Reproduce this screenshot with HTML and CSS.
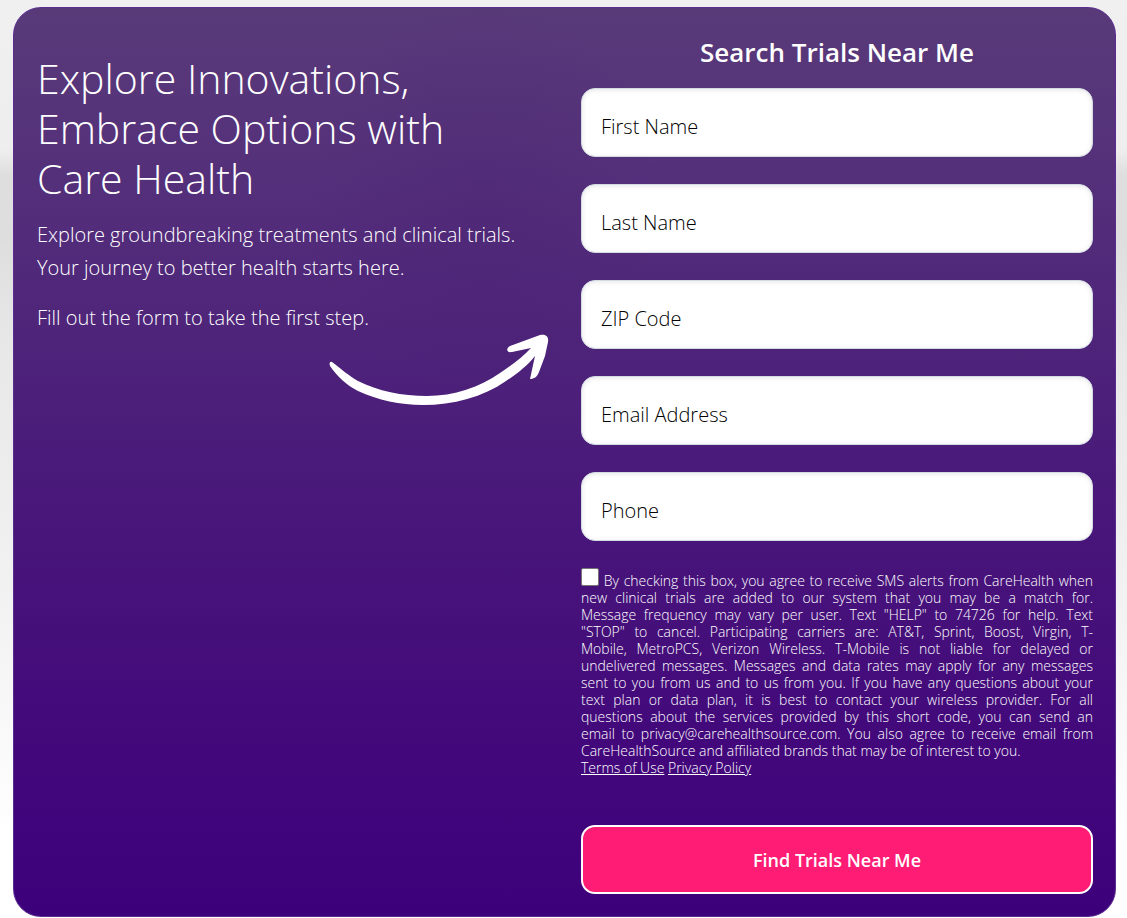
FILE: index.html
```html
<!DOCTYPE html>
<html lang="en">
<head>
<meta charset="UTF-8">
<meta name="viewport" content="width=device-width, initial-scale=1">
<title>Care Health - Search Trials Near Me</title>
<link rel="stylesheet" href="styles.css">
</head>
<body>
<main class="card">
  <section class="intro">
    <h1>Explore Innovations, Embrace Options with Care Health</h1>
    <p>Explore groundbreaking treatments and clinical trials. Your journey to better health starts here.</p>
    <p>Fill out the form to take the first step.</p>
    <svg class="arrow" width="221" height="72" viewBox="0 0 221 72" aria-hidden="true">
      <path fill="#fff" d="M4 28 C12 34 21 42 30 47 C50 57 74 62 99 62 C126 62 152 53 172 39 C184 31 195 23 203 14 L184 18 C178 19 178 14 182 12 L212 1 C217 0 221 2 220 8 L217 22 L211 38 C209 43 206 45 202 45 L207 22 C199 32 190 39 178 47 C155 63 125 71 95 71 C72 71 50 66 30 57 C18 51 9 42 2 32 C1 29 2 27 4 28 Z"/>
    </svg>
  </section>

  <form class="trial-form">
    <h2>Search Trials Near Me</h2>
    <div class="fields">
      <input type="text" aria-label="First Name" placeholder="First Name">
      <input type="text" aria-label="Last Name" placeholder="Last Name">
      <input type="text" aria-label="ZIP Code" placeholder="ZIP Code">
      <input type="email" aria-label="Email Address" placeholder="Email Address">
      <input type="tel" aria-label="Phone" placeholder="Phone">
    </div>
    <div class="consent">
      <label>
        <input type="checkbox">
        By checking this box, you agree to receive SMS alerts from CareHealth when<br>
        new clinical trials are added to our system that you may be a match for.<br>
        Message frequency may vary per user. Text "HELP" to 74726 for help. Text<br>
        "STOP" to cancel. Participating carriers are: AT&amp;T, Sprint, Boost, Virgin, T-<br>
        Mobile, MetroPCS, Verizon Wireless. T-Mobile is not liable for delayed or<br>
        undelivered messages. Messages and data rates may apply for any messages<br>
        sent to you from us and to us from you. If you have any questions about your<br>
        text plan or data plan, it is best to contact your wireless provider. For all<br>
        questions about the services provided by this short code, you can send an<br>
        email to privacy@carehealthsource.com. You also agree to receive email from
        <span class="last-line">CareHealthSource and affiliated brands that may be of interest to you.</span>
      </label>
      <a href="#">Terms of Use</a> <a href="#">Privacy Policy</a>
    </div>
    <button type="submit">Find Trials Near Me</button>
  </form>
</main>
</body>
</html>
```
FILE: styles.css
```css
* { box-sizing: border-box; }
body {
  min-height: 100vh;
  margin: 0;
  padding: 7px 11px 1px 13px;
  font-family: "Open Sans", "Noto Sans", sans-serif;
  font-weight: 300;
  color: #fff;
  background: linear-gradient(to bottom, #f0f0f0 0, #eeeeee 150px, #dedede 175px, #dedede 240px, #e8e8e8 350px, #f2f2f2 600px, #fff 840px);
}
.card {
  display: grid;
  grid-template-columns: 1fr 1fr;
  gap: 32px;
  padding: 24px 22px 22px 23px;
  border: 1px solid #5b2d91;
  border-radius: 28px;
  background:
    radial-gradient(ellipse 180px 200px at 470px 190px, rgba(60, 20, 105, 0.15), transparent),
    linear-gradient(to bottom, #583a79 0, #55317a 150px, #4e247a 330px, #48167a 520px, #42087b 740px, #3d007b 100%);
}
.intro { display: flex; flex-direction: column; padding-top: 21px; }
.intro h1 {
  max-width: 440px;
  margin: 0 0 15px;
  font-size: 41px;
  font-weight: 300;
  line-height: 50px;
}
.intro p { margin: 0 0 17px; font-size: 20px; line-height: 33px; }
.intro p:last-of-type { margin-bottom: 0; }
.arrow { align-self: flex-end; }
.trial-form { display: flex; flex-direction: column; }
.trial-form h2 {
  margin: 0 0 16px;
  font-size: 26px;
  font-weight: 600;
  line-height: 40px;
  text-align: center;
}
.fields { display: grid; gap: 27px; margin-bottom: 27px; }
.fields input {
  width: 100%;
  height: 69px;
  padding: 7px 19px 0;
  border: 1px solid #d3dbe3;
  border-radius: 14px;
  background: #fff;
  box-shadow: inset 0 1px 5px rgba(0, 0, 0, 0.1);
  font: inherit;
  font-size: 20px;
  color: #000;
}
.fields input::placeholder { color: #000; opacity: 1; }
.consent {
  margin-bottom: 49px;
  font-size: 14px;
  line-height: 17px;
}
.consent label { display: block; text-align: justify; text-align-last: justify; }
.consent .last-line { display: block; text-align-last: left; }
.consent input {
  appearance: none;
  width: 18px;
  height: 18px;
  margin: 0;
  border: 1px solid #767676;
  border-radius: 2px;
  background: #fff;
}
.consent input:checked { background: #ff1c74; }
.consent a { color: #fff; }
.trial-form button {
  height: 69px;
  border: 2px solid #fff;
  border-radius: 14px;
  background: #ff1c74;
  color: #fff;
  font: inherit;
  font-size: 18px;
  font-weight: 600;
  cursor: pointer;
}
@media (max-width: 760px) {
  .card { grid-template-columns: 1fr; }
}
```
